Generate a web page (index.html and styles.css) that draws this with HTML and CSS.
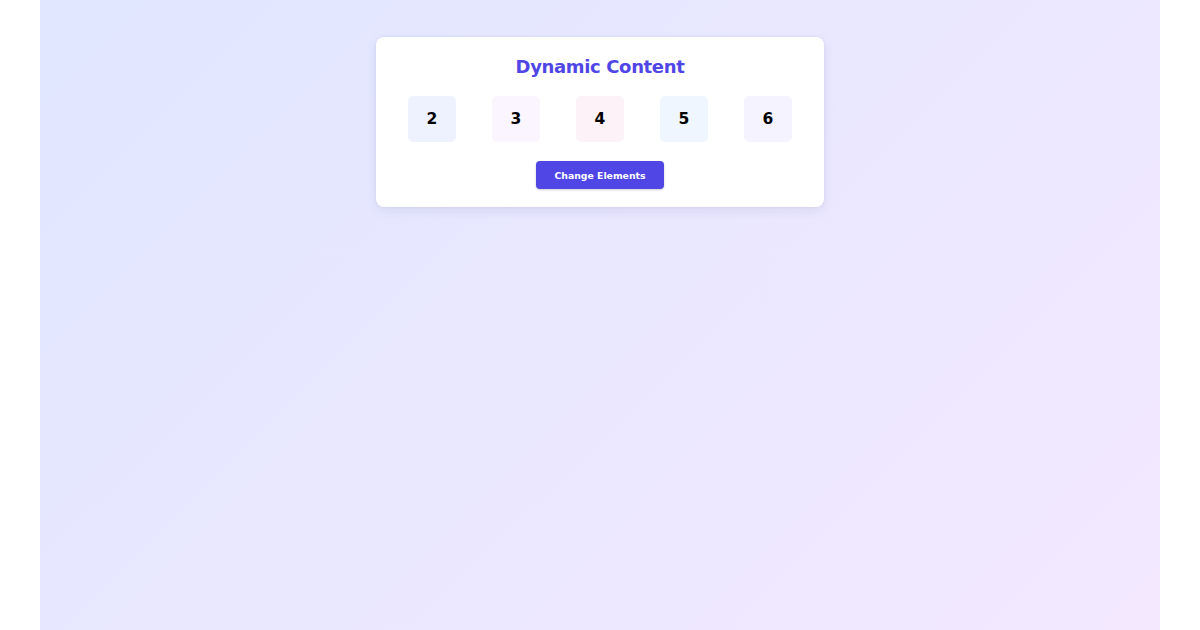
FILE: index.html
```html
<!DOCTYPE html>
<html lang="en">
<head>
<meta charset="utf-8">
<title>Dynamic Content</title>
<link rel="stylesheet" href="styles.css">
</head>
<body>
  <main class="page">
    <section class="card">
      <h1 class="title">Dynamic Content</h1>
      <div class="items">
        <div class="item item-indigo">2</div>
        <div class="item item-purple">3</div>
        <div class="item item-pink">4</div>
        <div class="item item-blue">5</div>
        <div class="item item-violet">6</div>
      </div>
      <button class="btn" type="button">Change Elements</button>
    </section>
  </main>
</body>
</html>
```

FILE: styles.css
```css
* {
  box-sizing: border-box;
}

html, body {
  margin: 0;
  padding: 0;
  background: #ffffff;
  font-family: "DejaVu Sans", sans-serif;
}

.page {
  width: 1120px;
  height: 630px;
  margin: 0 auto;
  padding-top: 37px;
  background: linear-gradient(135deg, #e0e7ff 0%, #f3e8ff 100%);
  display: flex;
  flex-direction: column;
  align-items: center;
}

.card {
  width: 448px;
  background: #ffffff;
  border-radius: 8px;
  padding: 16px 32px 18px;
  box-shadow: 0 4px 12px rgba(30, 20, 90, 0.08), 0 0 3px rgba(30, 20, 90, 0.06);
  display: flex;
  flex-direction: column;
  align-items: center;
}

.title {
  margin: 0;
  font-size: 18px;
  line-height: 28px;
  letter-spacing: -0.35px;
  font-weight: 700;
  color: #4f46e5;
}

.items {
  width: 100%;
  margin-top: 15px;
  display: flex;
  justify-content: space-between;
}

.item {
  width: 48px;
  height: 46px;
  border-radius: 5px;
  display: flex;
  align-items: center;
  justify-content: center;
  font-size: 15.5px;
  font-weight: 700;
  color: #000000;
}

.item-indigo { background: #eef2ff; }
.item-purple { background: #faf5ff; }
.item-pink { background: #fdf2f8; }
.item-blue { background: #eff6ff; }
.item-violet { background: #f5f3ff; }

.btn {
  margin-top: 19px;
  width: 128px;
  height: 28px;
  border: none;
  border-radius: 4px;
  background: #4f46e5;
  color: #ffffff;
  font-family: "DejaVu Sans", sans-serif;
  font-size: 9.3px;
  font-weight: 700;
  box-shadow: 0 1px 3px rgba(0, 0, 0, 0.12), 0 1px 2px rgba(0, 0, 0, 0.08);
  cursor: pointer;
}
```
